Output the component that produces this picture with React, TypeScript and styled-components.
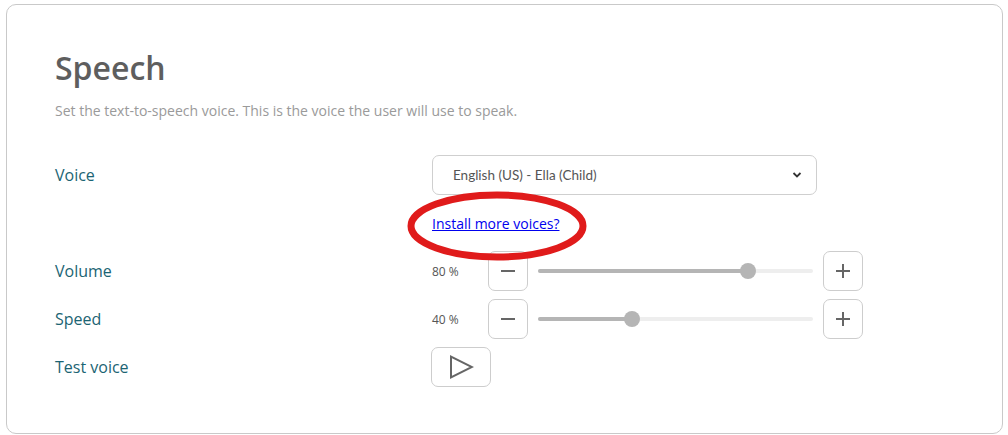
import React from 'react';
import styled, { createGlobalStyle } from 'styled-components';

const GlobalStyle = createGlobalStyle`
  html, body {
    margin: 0;
    padding: 0;
    background: #fff;
  }
  body {
    font-family: "Open Sans", Lato, sans-serif;
    color: #555;
  }
`;

const Page = styled.div`
  padding: 4px 5px 2px 6px;
`;

const Card = styled.section`
  position: relative;
  border: 1px solid #c9c9c9;
  border-radius: 10px;
  padding: 41px 48px 45px 48px;
  height: 342px;
`;

const Title = styled.h1`
  margin: 0;
  font-size: 32px;
  font-weight: 600;
  color: #5e5e5e;
  line-height: 44px;
`;

const Subtitle = styled.p`
  margin: 11px 0 0 0;
  font-size: 14px;
  line-height: 20px;
  color: #9a9a9a;
`;

const Form = styled.div`
  margin-top: 34px;
  display: grid;
  grid-template-columns: 376px 1fr;
  grid-auto-rows: 40px;
  row-gap: 8px;
  align-items: center;
`;

const Label = styled.div`
  font-size: 16px;
  color: #1b6473;
`;

const Controls = styled.div`
  display: flex;
  align-items: center;
  height: 40px;
`;

const Select = styled.div`
  width: 385px;
  height: 40px;
  margin-left: 1px;
  box-sizing: border-box;
  border: 1px solid #cfcfcf;
  border-radius: 7px;
  display: flex;
  align-items: center;
  justify-content: space-between;
  padding: 0 14px 0 20px;
  font-family: Lato, sans-serif;
  font-size: 13.5px;
  color: #555;
`;

const Link = styled.a`
  margin-left: 1px;
  font-size: 14px;
  color: #0000ee;
  text-decoration: underline;
`;

const Percent = styled.span`
  width: 56px;
  padding-left: 1px;
  font-size: 12px;
  color: #555;
`;

const IconButton = styled.button<{ $wide?: boolean }>`
  width: ${(p) => (p.$wide ? '60px' : '40px')};
  height: 40px;
  box-sizing: border-box;
  border: 1px solid #cdcdcd;
  border-radius: 7px;
  background: #fff;
  padding: 0;
  display: flex;
  align-items: center;
  justify-content: center;
  color: #666;
`;

const Track = styled.div`
  position: relative;
  width: 275px;
  height: 4px;
  margin: 0 10px;
  border-radius: 2px;
  background: #eeeeee;
`;

const Fill = styled.div`
  height: 100%;
  border-radius: 2px;
  background: #b5b5b5;
`;

const Thumb = styled.div`
  position: absolute;
  top: 50%;
  width: 16px;
  height: 16px;
  margin: -8px 0 0 -8px;
  border-radius: 50%;
  background: #b5b5b5;
`;

const Annotation = styled.svg`
  position: absolute;
  left: 393px;
  top: 183px;
  pointer-events: none;
`;

const Minus = () => (
  <svg width="16" height="16" viewBox="0 0 16 16">
    <path d="M1 8h14" stroke="#666" strokeWidth="2" />
  </svg>
);

const Plus = () => (
  <svg width="16" height="16" viewBox="0 0 16 16">
    <path d="M1 8h14M8 1v14" stroke="#666" strokeWidth="2" />
  </svg>
);

const Chevron = () => (
  <svg width="10" height="8" viewBox="0 0 10 8">
    <path d="M1.5 2l3.5 3.5L8.5 2" stroke="#333" strokeWidth="1.8" fill="none" />
  </svg>
);

const Play = () => (
  <svg width="26" height="26" viewBox="0 0 26 26">
    <path d="M3 2.5v21L24 13z" stroke="#666" strokeWidth="2" fill="none" strokeLinejoin="miter" />
  </svg>
);

const Slider = ({ value, pos }: { value: number; pos: number }) => (
  <Controls>
    <Percent>{value} %</Percent>
    <IconButton><Minus /></IconButton>
    <Track>
      <Fill style={{ width: `${pos}px` }} />
      <Thumb style={{ left: `${pos}px` }} />
    </Track>
    <IconButton><Plus /></IconButton>
  </Controls>
);

export default function App() {
  return (
    <Page>
      <GlobalStyle />
      <Card>
        <Title>Speech</Title>
        <Subtitle>Set the text-to-speech voice. This is the voice the user will use to speak.</Subtitle>
        <Form>
          <Label>Voice</Label>
          <Controls>
            <Select>
              <span>English (US) - Ella (Child)</span>
              <Chevron />
            </Select>
          </Controls>
          <span />
          <Controls>
            <Link href="#">Install more voices?</Link>
          </Controls>
          <Label>Volume</Label>
          <Slider value={80} pos={210} />
          <Label>Speed</Label>
          <Slider value={40} pos={94} />
          <Label>Test voice</Label>
          <Controls>
            <IconButton $wide><Play /></IconButton>
          </Controls>
        </Form>
        <Annotation width="200" height="80" viewBox="0 0 200 80">
          <ellipse cx="97" cy="38" rx="86" ry="31" fill="none" stroke="#e01b1b" strokeWidth="7" />
        </Annotation>
      </Card>
    </Page>
  );
}
